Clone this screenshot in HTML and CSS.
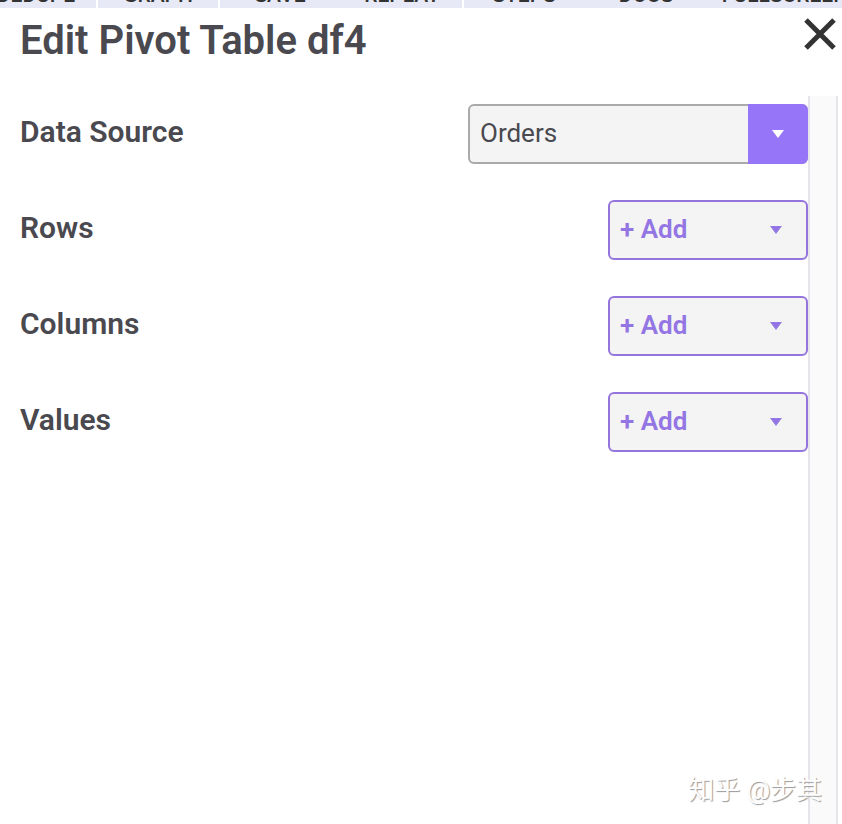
FILE: index.html
```html
<!DOCTYPE html>
<html lang="en">
<head>
<meta charset="utf-8">
<title>Edit Pivot Table df4</title>
<link rel="stylesheet" href="styles.css">
</head>
<body>
<nav class="toolbar">
  <a class="tool divided" href="#">DEDUPE</a>
  <a class="tool divided" href="#">GRAPH</a>
  <a class="tool" href="#">SAVE</a>
  <a class="tool divided" href="#">REPLAY</a>
  <a class="tool" href="#">STEPS</a>
  <a class="tool" href="#">DOCS</a>
  <a class="tool wide" href="#">FULLSCREEN</a>
</nav>
<header class="header">
  <h1 class="title">Edit Pivot Table df4</h1>
  <button class="close" type="button" aria-label="Close">
    <svg class="close-icon" viewBox="0 0 32 32"><path d="M2 2L30 30M30 2L2 30"/></svg>
  </button>
</header>
<main class="panel">
  <form class="form">
    <div class="row">
      <label class="label" for="source">Data Source</label>
      <div class="picker picker-source">
        <select class="select" id="source"><option>Orders</option></select>
        <span class="arrow"><svg class="triangle" viewBox="0 0 12 8"><path d="M0 0H12L6 8Z"/></svg></span>
      </div>
    </div>
    <div class="row">
      <label class="label" for="rows">Rows</label>
      <div class="picker">
        <select class="select" id="rows"><option>+ Add</option></select>
        <span class="arrow"><svg class="triangle" viewBox="0 0 12 8"><path d="M0 0H12L6 8Z"/></svg></span>
      </div>
    </div>
    <div class="row">
      <label class="label" for="columns">Columns</label>
      <div class="picker">
        <select class="select" id="columns"><option>+ Add</option></select>
        <span class="arrow"><svg class="triangle" viewBox="0 0 12 8"><path d="M0 0H12L6 8Z"/></svg></span>
      </div>
    </div>
    <div class="row">
      <label class="label" for="values">Values</label>
      <div class="picker">
        <select class="select" id="values"><option>+ Add</option></select>
        <span class="arrow"><svg class="triangle" viewBox="0 0 12 8"><path d="M0 0H12L6 8Z"/></svg></span>
      </div>
    </div>
  </form>
  <div class="track"></div>
</main>
<div class="watermark" lang="zh">知乎 @步其</div>
</body>
</html>
```
FILE: styles.css
```css
* {
  box-sizing: border-box;
}

body {
  margin: 0;
  min-height: 100vh;
  display: flex;
  flex-direction: column;
  background: #fff;
  color: #49494f;
  font-family: Roboto, "Noto Sans CJK SC", sans-serif;
}

.toolbar {
  display: flex;
  align-items: flex-end;
  height: 8px;
  overflow: hidden;
  background: #e7e9f6;
}

.tool {
  flex: 0 0 122px;
  padding-bottom: 1px;
  border-right: 2px solid transparent;
  color: #333;
  font-size: 21px;
  font-weight: 500;
  line-height: 24px;
  text-align: center;
  text-decoration: none;
}

.tool:first-child {
  margin-left: -24px;
}

.divided {
  border-right-color: #fff;
}

.wide {
  flex-basis: 156px;
}

.header {
  display: flex;
  justify-content: space-between;
  align-items: flex-start;
  height: 88px;
  padding: 9px 6px 0 20px;
}

.title {
  margin: 0;
  font-size: 40px;
  font-weight: 600;
  line-height: 48px;
}

.close {
  margin-top: 1px;
  padding: 0;
  border: 0;
  background: none;
}

.close-icon {
  display: block;
  width: 32px;
  height: 32px;
  fill: none;
  stroke: #333;
  stroke-width: 5;
}

.panel {
  flex: 1;
  display: flex;
  padding-right: 4px;
}

.form {
  flex: 1;
  display: flex;
  flex-direction: column;
  gap: 36px;
  padding: 8px 0 0 20px;
}

.row {
  display: flex;
  justify-content: space-between;
  align-items: center;
}

.label {
  padding-bottom: 4px;
  font-size: 30px;
  font-weight: 600;
  line-height: 36px;
}

.picker {
  position: relative;
  width: 200px;
  height: 60px;
  color: #9475e4;
}

.select {
  appearance: none;
  display: block;
  width: 100%;
  height: 100%;
  padding: 0 60px 2px 10px;
  border: 2px solid #9475de;
  border-radius: 6px;
  background: #f4f4f4;
  color: inherit;
  font: 600 26px/32px Roboto, sans-serif;
}

.arrow {
  position: absolute;
  inset: 0 2px 0 auto;
  width: 60px;
  display: flex;
  align-items: center;
  justify-content: center;
  pointer-events: none;
}

.triangle {
  width: 12px;
  height: 8px;
  fill: currentColor;
}

.picker-source {
  width: 340px;
  color: #49494f;
}

.picker-source .select {
  border-color: #aaa;
  font-weight: 400;
}

.picker-source .arrow {
  right: 0;
  border-radius: 0 6px 6px 0;
  background: #9775f8;
  color: #fff;
}

.track {
  width: 30px;
  border: solid #e6e6ea;
  border-width: 0 2px;
  background: #fafafa;
}

.watermark {
  position: absolute;
  right: 20px;
  bottom: 16px;
  color: #fff;
  font-size: 26px;
  line-height: 36px;
  text-shadow: 1px 1px 1px #999;
}
```
